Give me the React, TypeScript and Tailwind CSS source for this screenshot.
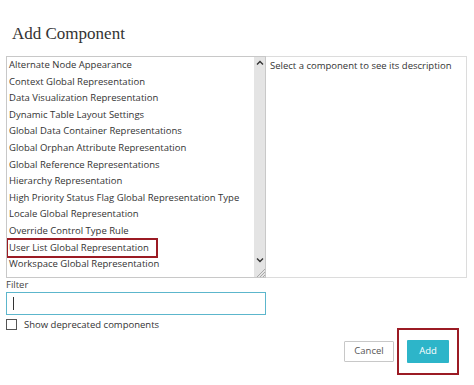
import React from "react";

const items = [
  "Alternate Node Appearance",
  "Context Global Representation",
  "Data Visualization Representation",
  "Dynamic Table Layout Settings",
  "Global Data Container Representations",
  "Global Orphan Attribute Representation",
  "Global Reference Representations",
  "Hierarchy Representation",
  "High Priority Status Flag Global Representation Type",
  "Locale Global Representation",
  "Override Control Type Rule",
  "User List Global Representation",
  "Workspace Global Representation",
];

const ChevronUp = () => (
  <svg width="8" height="6" viewBox="0 0 8 6" className="block shrink-0">
    <path d="M1 4.5 L4 1.5 L7 4.5" fill="none" stroke="#333" strokeWidth="1.4" />
  </svg>
);

const ChevronDown = () => (
  <svg width="8" height="6" viewBox="0 0 8 6" className="block shrink-0">
    <path d="M1 1.5 L4 4.5 L7 1.5" fill="none" stroke="#333" strokeWidth="1.4" />
  </svg>
);

const Grip = () => (
  <svg width="9" height="9" viewBox="0 0 9 9" className="block">
    <path d="M9 1 L1 9 M9 4 L4 9 M9 7 L7 9" stroke="#999" strokeWidth="0.8" />
  </svg>
);

export default function App() {
  return (
    <div className="w-[474px] h-[385px] bg-white text-[#333] font-['Open_Sans','Noto_Sans',sans-serif] overflow-hidden">
      {/* Titel */}
      <h1 className="pl-3 pt-[24px] h-[56px] text-[17px] leading-[20px] font-['Liberation_Serif',serif] text-[#333]">
        Add Component
      </h1>

      {/* Liste + Beschreibung */}
      <div className="flex pl-[6px] h-[222px]">
        <div className="relative grid grid-cols-[1fr_11px] w-[260px] h-full border border-[#c8c8c8]">
          <ul className="pl-[2px] text-[9.5px] leading-[16.6px] overflow-hidden">
            {items.map((item) => (
              <li key={item} className="relative whitespace-nowrap">
                {item === "User List Global Representation" && (
                  <span className="absolute left-[-3px] top-[-2px] w-[152px] h-[20px] border-2 border-[#9b1b24]" />
                )}
                {item}
              </li>
            ))}
          </ul>
          <div className="flex flex-col items-center justify-between h-full bg-[#e4e4e4] pt-[3px] pb-[14px]">
            <ChevronUp />
            <ChevronDown />
          </div>
          <div className="absolute right-0 bottom-0">
            <Grip />
          </div>
        </div>
        <div className="w-[201px] h-full border border-l-0 border-[#dcdcdc] pl-[4px] pt-[2px] text-[9.5px] leading-[14px] whitespace-nowrap">
          Select a component to see its description
        </div>
      </div>

      {/* Filter */}
      <div className="pl-[6px]">
        <label className="block text-[9.5px] leading-[13px] text-[#444]">Filter</label>
        <div className="mt-[1px] w-[260px] h-[23px] border border-[#5cb6cc] flex items-center pl-[6px]">
          <span className="w-[1px] h-[13px] bg-[#333]" />
        </div>
        <label className="mt-[3px] flex items-center gap-[7px] text-[9.5px] leading-[13px]">
          <span className="w-[11px] h-[11px] border border-[#555] bg-white" />
          Show deprecated components
        </label>
      </div>

      {/* Knoepfe */}
      <div className="-mt-[3px] flex justify-end items-center pr-[15px]">
        <button className="w-[50px] h-[21px] border border-[#c8c8c8] bg-white text-[9.5px] text-[#555] rounded-[1px]">
          Cancel
        </button>
        <div className="ml-[3px] w-[62px] h-[47px] border-2 border-[#9b1b24] flex items-center justify-center">
          <button className="w-[42px] h-[23px] bg-[#2db5c9] text-white text-[9.5px] rounded-[1px]">
            Add
          </button>
        </div>
      </div>
    </div>
  );
}
